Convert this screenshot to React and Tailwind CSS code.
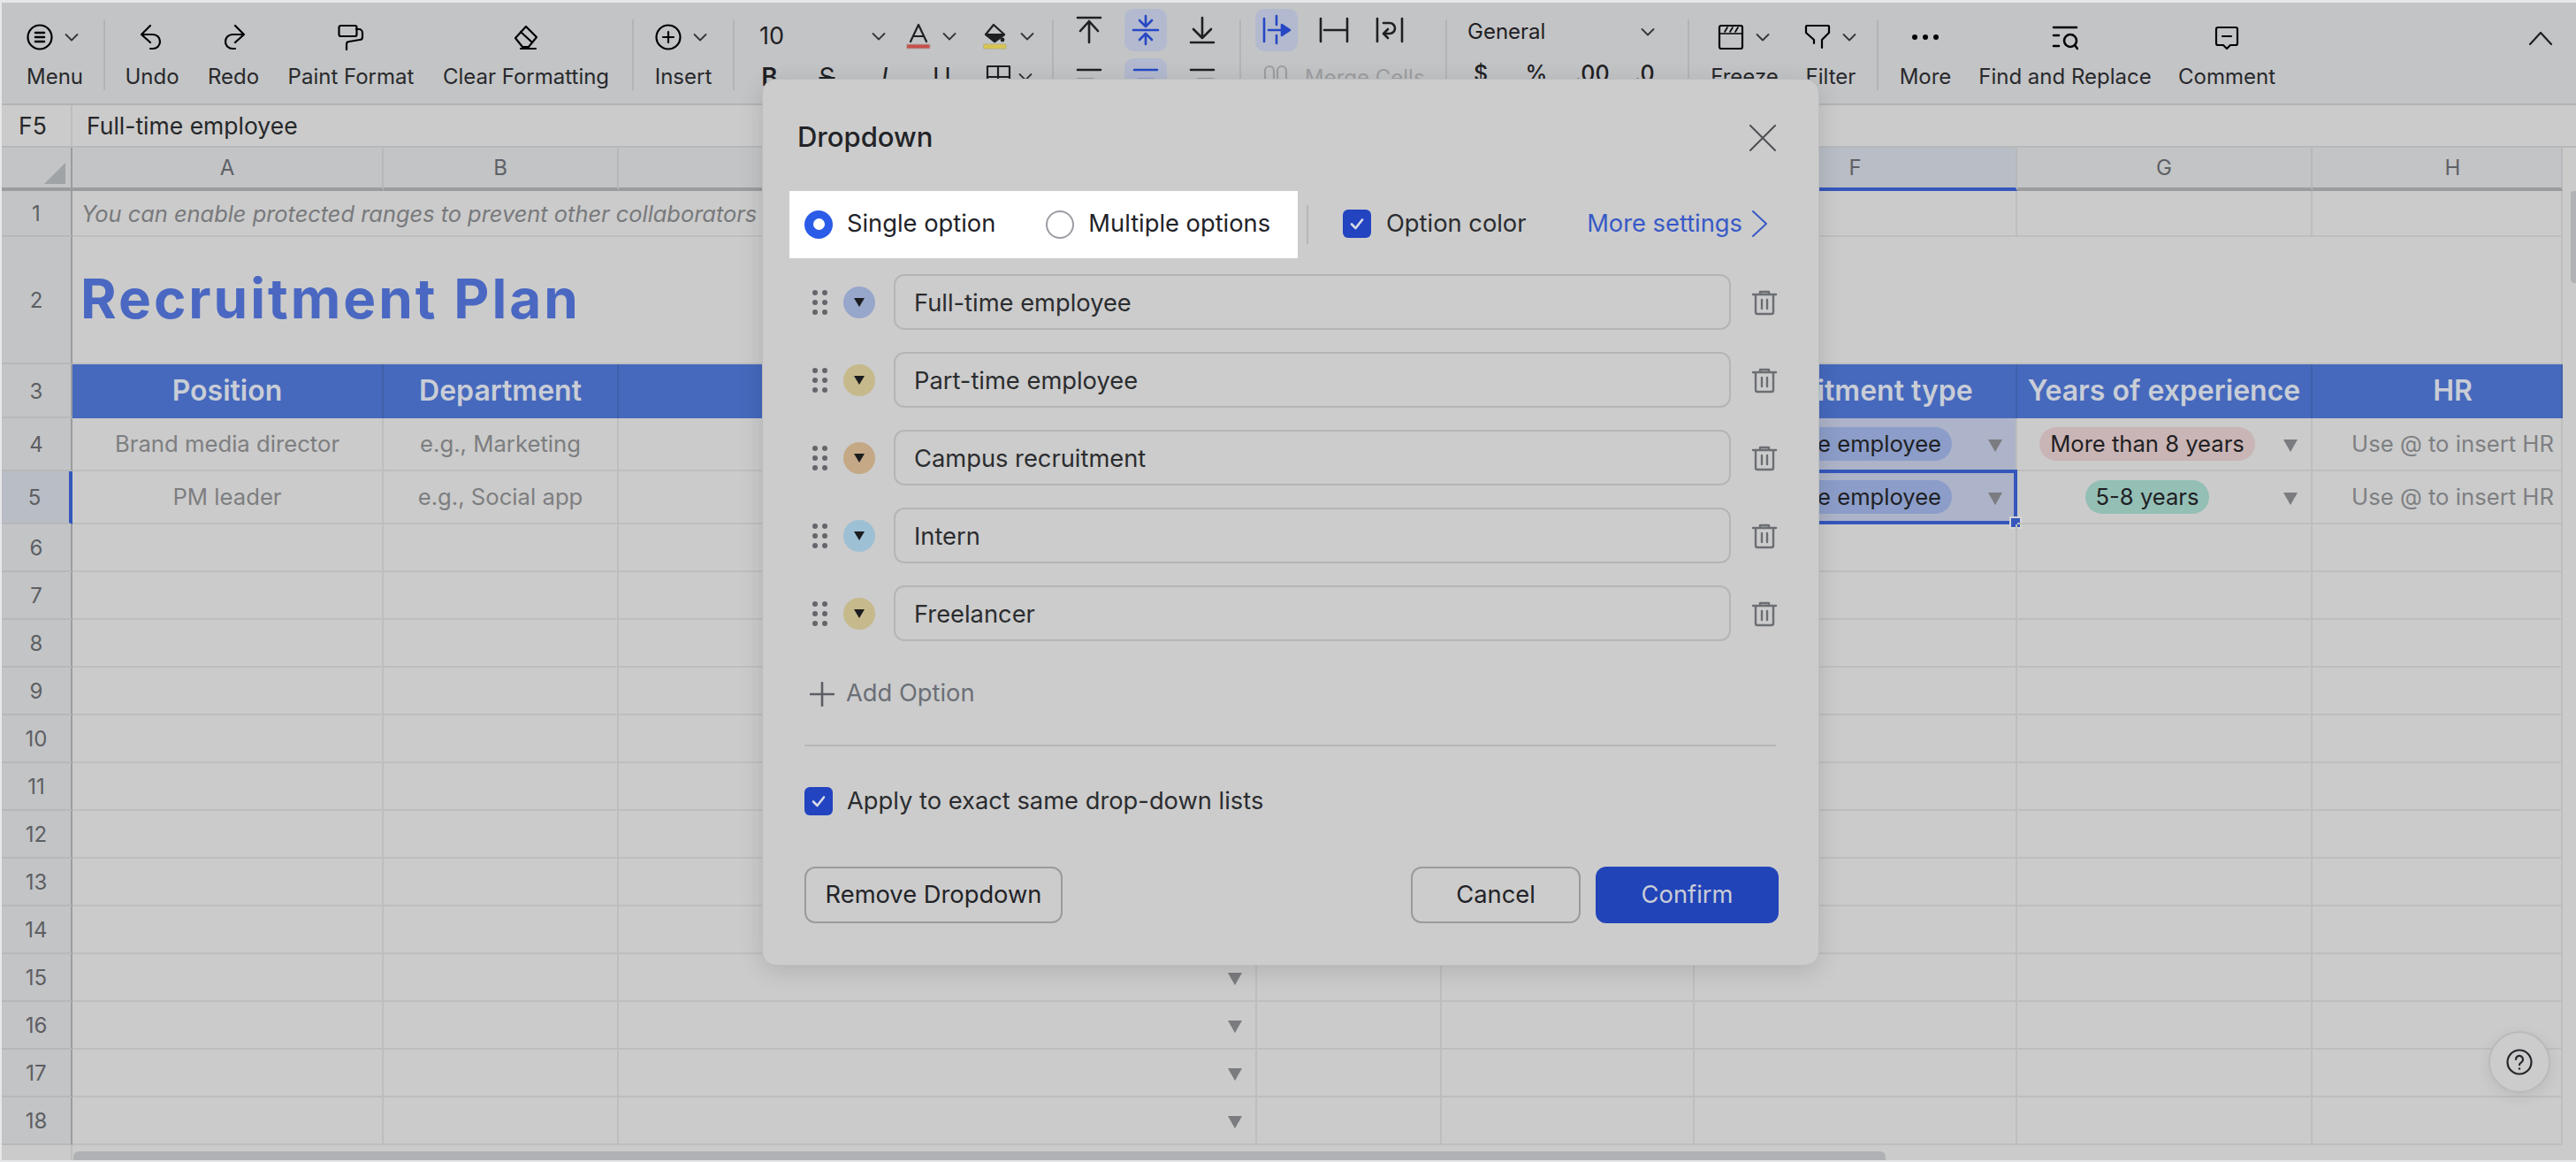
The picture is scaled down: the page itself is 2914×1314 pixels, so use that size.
import React from "react";

// shared column template for every sheet row
const cols = "grid grid-cols-[80px_352px_266px_722px_209px_286px_365px_334px_283px_15px]";

const Ico = ({ size = 30, box, className = "", children, sw = 2.2 }) => (
  <svg
    width={size}
    height={size}
    viewBox={`0 0 ${box || size} ${box || size}`}
    fill="none"
    stroke="currentColor"
    strokeWidth={sw}
    strokeLinecap="round"
    strokeLinejoin="round"
    className={"shrink-0 " + className}
  >
    {children}
  </svg>
);

const Chev = ({ className = "" }) => (
  <Ico size={20} sw={1.8} className={"text-[#33353a] " + className}>
    <path d="M3.5 7 10 13.5 16.5 7" />
  </Ico>
);

const Divider = () => <div className="w-[2px] h-[80px] mt-[19px] bg-[#b3b4b6] shrink-0" />;

const ToolItem = ({ w, icon, label, chev, rowClass = "" }) => (
  <div className={"flex flex-col items-center pt-[17px] shrink-0 " + w}>
    <div className={"h-[44px] flex items-center gap-[11px] " + rowClass}>
      {icon}
      {chev && <Chev />}
    </div>
    <div className="h-[46px] leading-[46px] text-[24px] text-[#28292c] whitespace-nowrap">{label}</div>
  </div>
);

const Cell48 = ({ active, children }) => (
  <div className={"w-[48px] h-[48px] rounded-[10px] flex items-center justify-center " + (active ? "bg-[#b3bacf] text-[#2748c4]" : "text-[#1f2023]")}>
    <Ico size={48} sw={2.6}>{children}</Ico>
  </div>
);

function Toolbar() {
  return (
    <div className="h-[116px] flex bg-[#c3c4c6] border-b-2 border-[#b2b3b5] overflow-hidden">
      <ToolItem
        w="w-[115px] !items-start pl-[28px]"
        chev
        label="Menu"
        icon={
          <Ico>
            <circle cx="15" cy="15" r="13.5" />
            <path d="M10 10h10M10 15h10M10 20h10" strokeWidth="2.6" />
          </Ico>
        }
      />
      <Divider />
      <div className="w-[7px]" />
      <ToolItem w="w-[92px]" label="Undo" icon={<Ico><path d="M13 2 3 12l10 9M3 12h13a8 8 0 0 1 0 16h-3" /></Ico>} />
      <ToolItem w="w-[92px]" label="Redo" icon={<Ico><path d="M17 2l10 10-10 9M27 12H14a8 8 0 0 0 0 16h3" /></Ico>} />
      <ToolItem
        w="w-[174px]"
        label="Paint Format"
        icon={
          <Ico>
            <rect x="1.5" y="2" width="20" height="12" rx="2" />
            <path d="M21 6h3a4 4 0 0 1 4 4v5a3 3 0 0 1-3 3l-12 2a3 3 0 0 0-3 3v6" />
          </Ico>
        }
      />
      <ToolItem
        w="w-[222px]"
        label="Clear Formatting"
        icon={
          <Ico>
            <path d="M15 3 27 15l-9 11h-7L3 16zM9 9l13 12M9 28h17" />
          </Ico>
        }
      />
      <div className="w-[9px]" />
      <Divider />
      <ToolItem
        w="w-[112px]"
        chev
        rowClass="-ml-[4px]"
        label="Insert"
        icon={
          <Ico>
            <circle cx="15" cy="15" r="13.5" />
            <path d="M15 9v12M9 15h12" />
          </Ico>
        }
      />
      <Divider />

      {/* font group, two rows */}
      <div className="w-[359px] shrink-0 pl-[28px] text-[#1f2023]">
        <div className="h-[60px] pt-[16px] flex items-center">
          <span className="w-[121px] text-[27px]">10</span>
          <Chev className="ml-[4px]" />
          <Ico className="ml-[20px]">
            <path d="M6 21 15 2l9 19M9 15h12" />
            <rect x="2" y="24" width="26" height="5" fill="#c6504a" stroke="#b0aaa8" strokeWidth="1" />
          </Ico>
          <Chev className="ml-[10px]" />
          <Ico className="ml-[26px]">
            <path d="M14 2l12 11-11 8-10-8z" />
            <path d="M5 13h21l-11 8z" fill="currentColor" />
            <circle cx="24" cy="19" r="2.4" fill="currentColor" stroke="none" />
            <rect x="3" y="24" width="25" height="5" fill="#d8c64e" stroke="#b8b17c" strokeWidth="1" />
          </Ico>
          <Chev className="ml-[12px]" />
        </div>
        <div className="h-[40px] flex items-center text-[28px] mt-[4px]">
          <span className="w-[65px] text-center -ml-[21px] font-semibold">B</span>
          <span className="w-[65px] text-center line-through">S</span>
          <span className="w-[65px] text-center italic">I</span>
          <span className="w-[65px] text-center underline">U</span>
          <Ico className="ml-[16px]">
            <rect x="3" y="3" width="25" height="24" />
            <path d="M15 3v24M3 15h25" />
          </Ico>
          <Chev className="ml-[6px]" />
        </div>
      </div>
      <Divider />

      {/* vertical and horizontal align */}
      <div className="w-[210px] shrink-0 pl-[16px] pt-[7px] grid grid-cols-[48px_48px_48px] gap-x-[16px] gap-y-[8px] content-start">
        <Cell48><path d="M11 10h26M24 14v24M14 25l10-11 10 11" /></Cell48>
        <Cell48 active><path d="M10 24h28M24 8v12M17 13l7 7 7-7M24 28v12M17 35l7-7 7 7" /></Cell48>
        <Cell48><path d="M11 38h26M24 10v23M14 23l10 10 10-10" /></Cell48>
        <Cell48><path d="M11 13h26M11 24h18M11 35h26" /></Cell48>
        <Cell48 active><path d="M11 13h26M15 24h18M11 35h26" /></Cell48>
        <Cell48><path d="M11 13h26M19 24h18M11 35h26" /></Cell48>
      </div>
      <Divider />

      {/* wrap and merge */}
      <div className="w-[231px] shrink-0 pl-[16px] pt-[7px]">
        <div className="flex gap-[16px]">
          <Cell48 active>
            <path d="M10 11v26M24 8v10M24 30v9M15 24h17" />
            <path d="M30 18l9 6-9 6z" fill="currentColor" />
          </Cell48>
          <Cell48><path d="M10 11v26M14 24h25M40 11v26" /></Cell48>
          <Cell48>
            <path d="M10 11v26M38 11v26M17 16h7a6 6 0 0 1 0 12h-6M22 23l-5 5 5 5" />
          </Cell48>
        </div>
        <div className="flex items-center mt-[10px] text-[#9d9ea1] text-[24px] h-[40px]">
          <Ico className="ml-[8px]"><rect x="3" y="2" width="10" height="26" rx="5" /><rect x="17" y="2" width="10" height="26" rx="5" /></Ico>
          <span className="ml-[18px] whitespace-nowrap">Merge Cells</span>
        </div>
      </div>
      <Divider />

      {/* number format */}
      <div className="w-[272px] shrink-0 pl-[23px] text-[#1f2023]">
        <div className="h-[60px] pt-[6px] flex items-center">
          <span className="w-[194px] text-[24px]">General</span>
          <Chev />
        </div>
        <div className="h-[40px] flex items-center text-[25px] mt-[1px] font-medium">
          <span className="w-[34px] text-center -ml-[2px]">$</span>
          <span className="ml-[29px] w-[34px] text-center">%</span>
          <span className="ml-[24px] w-[44px] text-center">.00</span>
          <span className="ml-[20px] w-[34px] text-center">.0</span>
        </div>
      </div>
      <Divider />

      <ToolItem
        w="w-[125px]"
        chev
        label="Freeze"
        icon={
          <Ico>
            <rect x="2" y="2" width="26" height="26" rx="2" />
            <path d="M2 11h26M8 9l3-5M14 9l3-5M20 9l3-5" strokeWidth="1.6" />
          </Ico>
        }
      />
      <ToolItem
        w="w-[70px]"
        chev
        label="Filter"
        icon={<Ico><path d="M3 2h24a1 1 0 0 1 1 1v7l-8 8v9M11 22v-4L2 10V3a1 1 0 0 1 1-1" /></Ico>}
      />
      <div className="w-[17px]" />
      <Divider />
      <ToolItem
        w="w-[106px]"
        label="More"
        icon={
          <Ico>
            <circle cx="3" cy="15" r="3" fill="currentColor" stroke="none" />
            <circle cx="15" cy="15" r="3" fill="currentColor" stroke="none" />
            <circle cx="27" cy="15" r="3" fill="currentColor" stroke="none" />
          </Ico>
        }
      />
      <ToolItem
        w="w-[210px]"
        label="Find and Replace"
        icon={
          <Ico sw={2.6}>
            <path d="M2 4h26M2 13h6M2 25h6" />
            <circle cx="21" cy="19" r="7" />
            <path d="M26 24l3 4" />
          </Ico>
        }
      />
      <ToolItem
        w="w-[156px]"
        label="Comment"
        icon={
          <Ico>
            <path d="M5 4h20a2 2 0 0 1 2 2v16a2 2 0 0 1-2 2h-6l-4 4-4-4H5a2 2 0 0 1-2-2V6a2 2 0 0 1 2-2zM10 14h10" />
          </Ico>
        }
      />
      <div className="ml-auto mr-[27px] mt-[30px] h-[20px] text-[#1f2023]">
        <Ico size={26}><path d="M1 17 13 4l12 13" /></Ico>
      </div>
    </div>
  );
}

const Arrow = () => (
  <svg width="16" height="14" viewBox="0 0 16 14" className="absolute right-[15px] top-1/2 -translate-y-[35%]">
    <path d="M0 0h16L8 14z" fill="#7a7c7f" />
  </svg>
);

const Pill = ({ bg, children }) => (
  <span className={"h-[38px] px-[12px] rounded-full flex items-center text-[#1f2023] text-[25.6px] whitespace-nowrap " + bg}>{children}</span>
);

const line = "border-r-2 border-b-2 border-[#bebebf]";

const RowHead = ({ n, active }) => (
  <div
    className={
      "flex items-center justify-center pt-[2px] text-[24px] text-[#5d5f63] border-b-2 border-[#b7b8ba] " +
      (active ? "bg-[#b9bdc5] border-r-4 border-r-[#3557bc] pr-[2px]" : "bg-[#c3c4c6] border-r-2 border-r-[#9b9c9e]")
    }
  >
    {n}
  </div>
);

const Scroll = () => <div className="bg-[#cbcbcb]" />;

const TextCell = ({ children }) => (
  <div className={line + " flex items-center justify-center pt-[1px] text-[25.7px] text-[#7d7e80] whitespace-nowrap"}>{children}</div>
);

const HeadCell = ({ className = "", children }) => (
  <div className={"bg-[#4669bd] border-r-2 border-[#4060a9] flex items-center justify-center pb-[2px] text-[32px] font-semibold text-[#c9cdd6] whitespace-nowrap " + className}>
    {children}
  </div>
);

const Empty = ({ arrow }) => <div className={line + " relative"}>{arrow && <Arrow />}</div>;

function Sheet() {
  const letters = [
    ["A", false, ""],
    ["B", false, ""],
    ["C", false, ""],
    ["D", false, ""],
    ["E", false, ""],
    ["F", true, ""],
    ["G", false, ""],
    ["H", false, "pl-[36px]"],
  ];
  const blank = [6, 7, 8, 9, 10, 11, 12, 13, 14, 15, 16, 17, 18];

  return (
    <div className="bg-[#cbcbcb]">
      {/* column letters */}
      <div className={cols + " h-[49px]"}>
        <div className="bg-[#c3c4c6] border-r-2 border-b-4 border-[#9b9c9e] relative">
          <svg width="24" height="24" viewBox="0 0 24 24" className="absolute left-[48px] top-[17px]">
            <path d="M24 0v24H0z" fill="#9fa3a6" />
          </svg>
        </div>
        {letters.map(([l, on, shift]) => (
          <div
            key={l}
            className={
              "flex items-center justify-center pt-[1px] text-[24px] text-[#5f6166] border-r-2 border-[#b7b8ba] border-b-4 " +
              (on ? "bg-[#b9bdc5] border-b-[#3557bc] " : "bg-[#c3c4c6] border-b-[#9b9c9e] ") +
              shift
            }
          >
            {l}
          </div>
        ))}
        <Scroll />
      </div>

      {/* row 1 */}
      <div className={cols + " h-[52px]"}>
        <RowHead n="1" />
        <div className={line + " col-span-5 flex items-center pl-[10px] pt-[2px] text-[25.4px] italic text-[#78797c] whitespace-nowrap"}>
          You can enable protected ranges to prevent other collaborators
        </div>
        <Empty />
        <Empty />
        <Empty />
        <Scroll />
      </div>

      {/* row 2 */}
      <div className={cols + " h-[144px]"}>
        <RowHead n="2" />
        <div className={line + " col-span-8 flex items-center pl-[9px] pb-[3px] text-[62px] font-bold tracking-[3px] text-[#4a68c2]"}>
          Recruitment Plan
        </div>
        <Scroll />
      </div>

      {/* row 3 */}
      <div className={cols + " h-[61px]"}>
        <RowHead n="3" />
        <HeadCell>Position</HeadCell>
        <HeadCell>Department</HeadCell>
        <HeadCell />
        <HeadCell />
        <HeadCell />
        <HeadCell>Recruitment type</HeadCell>
        <HeadCell>Years of experience</HeadCell>
        <HeadCell className="pl-[36px]">HR</HeadCell>
        <Scroll />
      </div>

      {/* rows 4, 5 */}
      {[
        ["4", "Brand media director", "e.g., Marketing", "More than 8 years", "bg-[#c9b5b5]"],
        ["5", "PM leader", "e.g., Social app", "5-8 years", "bg-[#93bfb5]"],
      ].map(([n, pos, dep, exp, expBg]) => (
        <div key={n} className={cols + " h-[60px]"}>
          <RowHead n={n} active={n === "5"} />
          <TextCell>{pos}</TextCell>
          <TextCell>{dep}</TextCell>
          <Empty arrow />
          <Empty />
          <Empty />
          <div className={line + " relative bg-[#adb3c8] flex items-center justify-end pr-[72px]"}>
            <Pill bg="bg-[#8b9dc8]">Full-time employee</Pill>
            <Arrow />
            {n === "5" && (
              <div className="absolute -inset-x-[2px] -inset-y-[2px] border-4 border-[#3557bc]">
                <div className="absolute -right-[9px] -bottom-[9px] w-[14px] h-[14px] bg-[#3557bc] border-2 border-[#d5d5d5]" />
              </div>
            )}
          </div>
          <div className={line + " relative flex items-center justify-center pr-[38px]"}>
            <Pill bg={expBg}>{exp}</Pill>
            <Arrow />
          </div>
          <div className={line + " flex items-center justify-end pr-[8px] pt-[1px] text-[25.7px] text-[#7d7f82] whitespace-nowrap"}>Use @ to insert HR</div>
          <Scroll />
        </div>
      ))}

      {/* empty rows */}
      {blank.map((n) => (
        <div key={n} className={cols + " h-[54px]"}>
          <RowHead n={n} />
          <Empty />
          <Empty />
          <Empty arrow />
          <Empty />
          <Empty />
          <Empty />
          <Empty />
          <Empty />
          <Scroll />
        </div>
      ))}

      {/* horizontal scrollbar */}
      <div className="h-[17px] flex">
        <div className="w-[80px] border-r-2 border-[#bebebf]" />
        <div className="ml-[1px] mt-[7px] w-[2050px] h-[10px] rounded-t-[6px] bg-[#b0b1b4]" />
      </div>
    </div>
  );
}

const options = [
  ["Full-time employee", "bg-[#97a6cb]"],
  ["Part-time employee", "bg-[#c6b98b]"],
  ["Campus recruitment", "bg-[#c5a885]"],
  ["Intern", "bg-[#9dc0d4]"],
  ["Freelancer", "bg-[#c6b98b]"],
];

const Check = () => (
  <div className="w-[32px] h-[32px] rounded-[6px] bg-[#2244c0] flex items-center justify-center shrink-0">
    <svg width="20" height="20" viewBox="0 0 20 20" fill="none" stroke="#d8dbe6" strokeWidth="2.6" strokeLinecap="round" strokeLinejoin="round">
      <path d="M4 10.5 8.5 15 16 5.5" />
    </svg>
  </div>
);

const OptionRow = ({ label, color }) => (
  <div className="flex items-center h-[63px] ml-[56px]">
    <svg width="17" height="28" viewBox="0 0 17 28" className="shrink-0" fill="#63666b">
      {[3, 14, 25].map((y) => (
        <g key={y}>
          <circle cx="3" cy={y} r="3" />
          <circle cx="14" cy={y} r="3" />
        </g>
      ))}
    </svg>
    <div className={"ml-[18px] w-[36px] h-[36px] rounded-full flex items-center justify-center shrink-0 " + color}>
      <svg width="12" height="10" viewBox="0 0 12 10"><path d="M0 0h12L6 10z" fill="#1c1d20" /></svg>
    </div>
    <div className="ml-[21px] w-[947px] h-[63px] rounded-[12px] border-2 border-[#b4b5b7] flex items-center pl-[21px] pt-[3px] text-[#2b2c2f]">
      {label}
    </div>
    <Ico size={30} className="ml-[23px] text-[#6b6e72]" sw={2.4}>
      <path d="M2 6h26M10 6V3h10v3M5 6v20a2 2 0 0 0 2 2h16a2 2 0 0 0 2-2V6M12 12v10M18 12v10" />
    </Ico>
  </div>
);

function Modal() {
  return (
    <div className="absolute left-[862px] top-[89px] w-[1196px] h-[1003px] rounded-[16px] bg-[#cccccc] border border-[#bcbdbf] shadow-[0_6px_28px_rgba(0,0,0,0.13)] text-[27.3px] text-[#2b2c2f]">
      <div className="flex items-center justify-between pl-[39px] pr-[48px] pt-[46px] h-[84px]">
        <span className="text-[31px] font-medium text-[#222327]">Dropdown</span>
        <Ico className="text-[#4d4f53] mt-[2px]" sw={2}>
          <path d="M1 1l28 28M29 1 1 29" />
        </Ico>
      </div>

      <div className="mt-[42px] flex items-center h-[76px]">
        <div className="ml-[30px] w-[575px] h-[76px] bg-white flex items-center pl-[17px] pb-[1px] text-[#1f2329]">
          <div className="w-[32px] h-[32px] rounded-full bg-[#2b5ce8] flex items-center justify-center shrink-0">
            <div className="w-[13px] h-[13px] rounded-full bg-white" />
          </div>
          <span className="ml-[16px] pb-[1px]">Single option</span>
          <div className="ml-[57px] w-[32px] h-[32px] rounded-full border-2 border-[#9a9da3] shrink-0" />
          <span className="ml-[16px] pb-[1px]">Multiple options</span>
        </div>
        <div className="ml-[10px] w-[2px] h-[44px] bg-[#b5b6b8]" />
        <div className="flex-1 flex items-center pb-[2px]">
          <div className="ml-[39px]"><Check /></div>
          <span className="ml-[17px]">Option color</span>
          <span className="ml-auto text-[#3759c7]">More settings</span>
          <Ico className="ml-[4px] mr-[52px] text-[#3759c7]" sw={2}>
            <path d="M8 1l15 14L8 29" />
          </Ico>
        </div>
      </div>

      <div className="mt-[18px] flex flex-col gap-[25px]">
        {options.map(([label, color]) => (
          <OptionRow key={label} label={label} color={color} />
        ))}
      </div>

      <div className="mt-[39px] ml-[53px] h-[40px] flex items-center pt-[1px] text-[#6b6f76]">
        <Ico size={28} className="text-[#5c5e64]" sw={2.6}>
          <path d="M14 1v26M1 14h26" />
        </Ico>
        <span className="ml-[13px]">Add Option</span>
      </div>

      <div className="mt-[38px] ml-[47px] mr-[48px] h-[2px] bg-[#b5b6b8]" />

      <div className="mt-[46px] ml-[47px] flex items-center h-[32px]">
        <Check />
        <span className="ml-[16px]">Apply to exact same drop-down lists</span>
      </div>

      <div className="mt-[58px] mr-[45px] ml-[47px] flex gap-[17px]">
        <button className="w-[292px] h-[64px] rounded-[12px] border-2 border-[#9a9b9d] text-[#222327] mr-auto">Remove Dropdown</button>
        <button className="w-[192px] h-[64px] rounded-[12px] border-2 border-[#9a9b9d] text-[#222327]">Cancel</button>
        <button className="w-[207px] h-[64px] rounded-[12px] bg-[#2144b9] text-[#c9ccd6]">Confirm</button>
      </div>
    </div>
  );
}

export default function App() {
  return (
    <div className="relative w-[2914px] h-[1314px] overflow-hidden bg-[#e6e7e8] pt-[3px] pl-[2px] font-[Inter,sans-serif]">
      <Toolbar />

      {/* formula bar */}
      <div className="h-[48px] flex bg-[#cbcbcb] border-b-2 border-[#b7b8ba] text-[26.5px] text-[#26272a]">
        <div className="w-[80px] border-r-2 border-[#bcbdbf] pl-[19px] pt-[2px] flex items-center">F5</div>
        <div className="pl-[16px] pt-[2px] flex items-center">Full-time employee</div>
      </div>

      <Sheet />
      <Modal />

      {/* vertical scrollbar thumb */}
      <div className="absolute right-0 top-[216px] w-[6px] h-[104px] rounded-l-[4px] bg-[#b1b2b5]" />

      {/* help */}
      <div className="absolute left-[2815px] top-[1166px] w-[70px] h-[70px] rounded-full bg-[#cccccc] border-2 border-[#b9babd] shadow-[0_4px_16px_rgba(0,0,0,0.08)] flex items-center justify-center text-[#24262a]">
        <Ico sw={2.2}>
          <circle cx="15" cy="15" r="13.5" />
          <path d="M11 12a4 4 0 1 1 6.2 3.3c-1.3.9-2.2 1.5-2.2 2.9" />
          <circle cx="15" cy="22.5" r="1.2" fill="currentColor" stroke="none" />
        </Ico>
      </div>
    </div>
  );
}
